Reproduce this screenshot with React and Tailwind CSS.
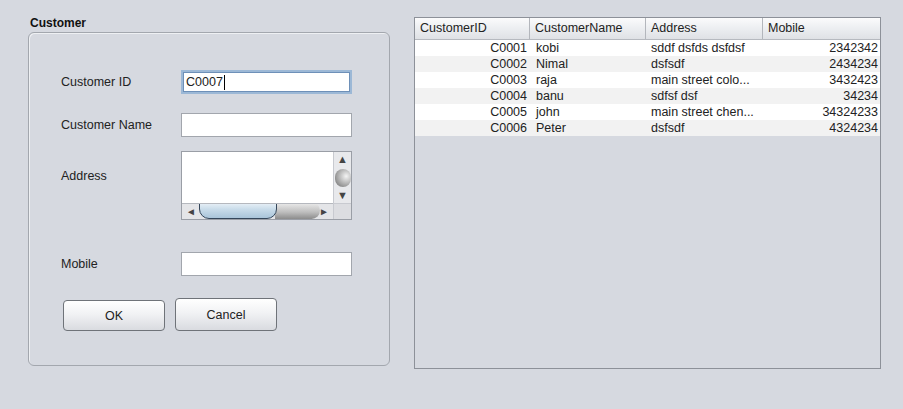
import React from "react";

const rows = [
  ["C0001", "kobi", "sddf dsfds dsfdsf", "2342342"],
  ["C0002", "Nimal", "dsfsdf", "2434234"],
  ["C0003", "raja", "main street colo...", "3432423"],
  ["C0004", "banu", "sdfsf dsf", "34234"],
  ["C0005", "john", "main street chen...", "34324233"],
  ["C0006", "Peter", "dsfsdf", "4324234"],
];

function Field({ focused, children }) {
  return (
    <div
      className={
        "h-[24px] w-[171px] bg-white flex items-center text-[12.5px] text-[#222] " +
        (focused
          ? "pl-[3px] border-2 border-[#9cb8d6] shadow-[inset_0_0_0_1px_#6e90b8]"
          : "pl-[4px] border border-[#a2a6ad]")
      }
    >
      {children}
    </div>
  );
}

function ScrollArea() {
  return (
    <div className="w-[171px] h-[69px] border border-[#9a9ea6] grid grid-cols-[151px_18px] grid-rows-[51px_16px] bg-white">
      <div className="bg-white" />
      <div className="bg-[#e8e9ec] border-l border-[#c8cad0] flex flex-col items-center justify-between py-[2px] relative overflow-hidden">
        <span className="text-[11px] leading-[11px] text-[#444]">▲</span>
        <div className="absolute left-[1px] top-[17px] w-[16px] h-[18px] rounded-full bg-[radial-gradient(circle_at_70%_40%,#f4f4f4,#a9a9a9_55%,#6a6a6a)]" />
        <span className="text-[11px] leading-[11px] text-[#444]">▼</span>
      </div>
      <div className="bg-[#e4e5e8] border-t border-[#b5b8be] relative flex items-center justify-between px-[4px] overflow-hidden">
        <span className="text-[10px] leading-[10px] text-[#444]">◄</span>
        <div className="absolute left-[93px] top-[-2px] w-[45px] h-[17px] rounded-r-full bg-[linear-gradient(#f0f0f0,#bdbdbd_60%,#8c8c8c)]" />
        <div className="absolute left-[17px] top-[-3px] w-[78px] h-[18px] rounded-b-[10px] border border-[#34465a] bg-[linear-gradient(#eef4f9,#c9dcea_45%,#a9c4d9)]" />
        <span className="text-[10px] leading-[10px] text-[#444] relative">►</span>
      </div>
      <div className="bg-[#dcdde1] border-t border-l border-[#c8cad0]" />
    </div>
  );
}

function Btn({ children, className = "" }) {
  return (
    <div
      className={
        "w-[102px] flex items-center justify-center rounded-[4px] border border-[#6f7379] bg-[linear-gradient(#ffffff,#f1f2f4_45%,#d9dbe0)] text-[12.5px] text-[#222] " +
        className
      }
    >
      {children}
    </div>
  );
}

export default function App() {
  return (
    <div
      className="w-[903px] h-[409px] bg-[#d6d9e0] flex text-[#222]"
      style={{ fontFamily: '"Liberation Sans", Arial, sans-serif' }}
    >
      {/* Left form */}
      <div className="pl-[28px] pt-[16px] w-[390px] flex flex-col">
        <div className="pl-[2px] text-[12px] font-bold leading-[14px] text-[#111]">Customer</div>
        <div className="mt-[2px] w-[362px] h-[334px] rounded-[6px] border border-[#a3a7ae] shadow-[1px_1px_0_#eef0f3_inset] flex flex-col pl-[32px]">
          <div className="mt-[37px] flex items-center">
            <div className="w-[120px] text-[12.5px]">Customer ID</div>
            <Field focused>
              C0007<span className="inline-block w-[1px] h-[15px] bg-black ml-[1px]" />
            </Field>
          </div>
          <div className="mt-[19px] flex items-center">
            <div className="w-[120px] text-[12.5px]">Customer Name</div>
            <Field />
          </div>
          <div className="mt-[14px] flex items-start">
            <div className="w-[120px] text-[12.5px] pt-[16px]">Address</div>
            <ScrollArea />
          </div>
          <div className="mt-[32px] flex items-center">
            <div className="w-[120px] text-[12.5px]">Mobile</div>
            <Field />
          </div>
          <div className="mt-[22px] flex items-end gap-[10px] pl-[2px]">
            <Btn className="h-[31px] pt-[1px]">OK</Btn>
            <Btn className="h-[33px] pt-[2px]">Cancel</Btn>
          </div>
        </div>
      </div>

      {/* Table */}
      <div className="ml-[24px] mt-[17px] w-[467px] h-[352px] border border-[#8d9199] bg-[#d6d9e0] flex flex-col">
        <div className="grid grid-cols-[115px_116px_117px_117px] h-[22px] bg-[linear-gradient(#fbfbfc,#eceef1_50%,#dfe1e5)] border-b border-[#b6b9bf] text-[12.5px]">
          {["CustomerID", "CustomerName", "Address", "Mobile"].map((h, i) => (
            <div
              key={h}
              className={
                "flex items-center pl-[5px] " +
                (i < 3 ? "border-r border-[#b3b6bc]" : "")
              }
            >
              {h}
            </div>
          ))}
        </div>
        {rows.map((r, i) => (
          <div
            key={r[0]}
            className={
              "grid grid-cols-[115px_116px_117px_117px] h-[16px] text-[12.5px] leading-[16px] " +
              (i % 2 ? "bg-[#f2f2f2]" : "bg-white")
            }
          >
            <div className="text-right pr-[3px]">{r[0]}</div>
            <div className="pl-[6px]">{r[1]}</div>
            <div className="pl-[5px] whitespace-nowrap overflow-hidden">{r[2]}</div>
            <div className="text-right pr-[2px]">{r[3]}</div>
          </div>
        ))}
      </div>
    </div>
  );
}
